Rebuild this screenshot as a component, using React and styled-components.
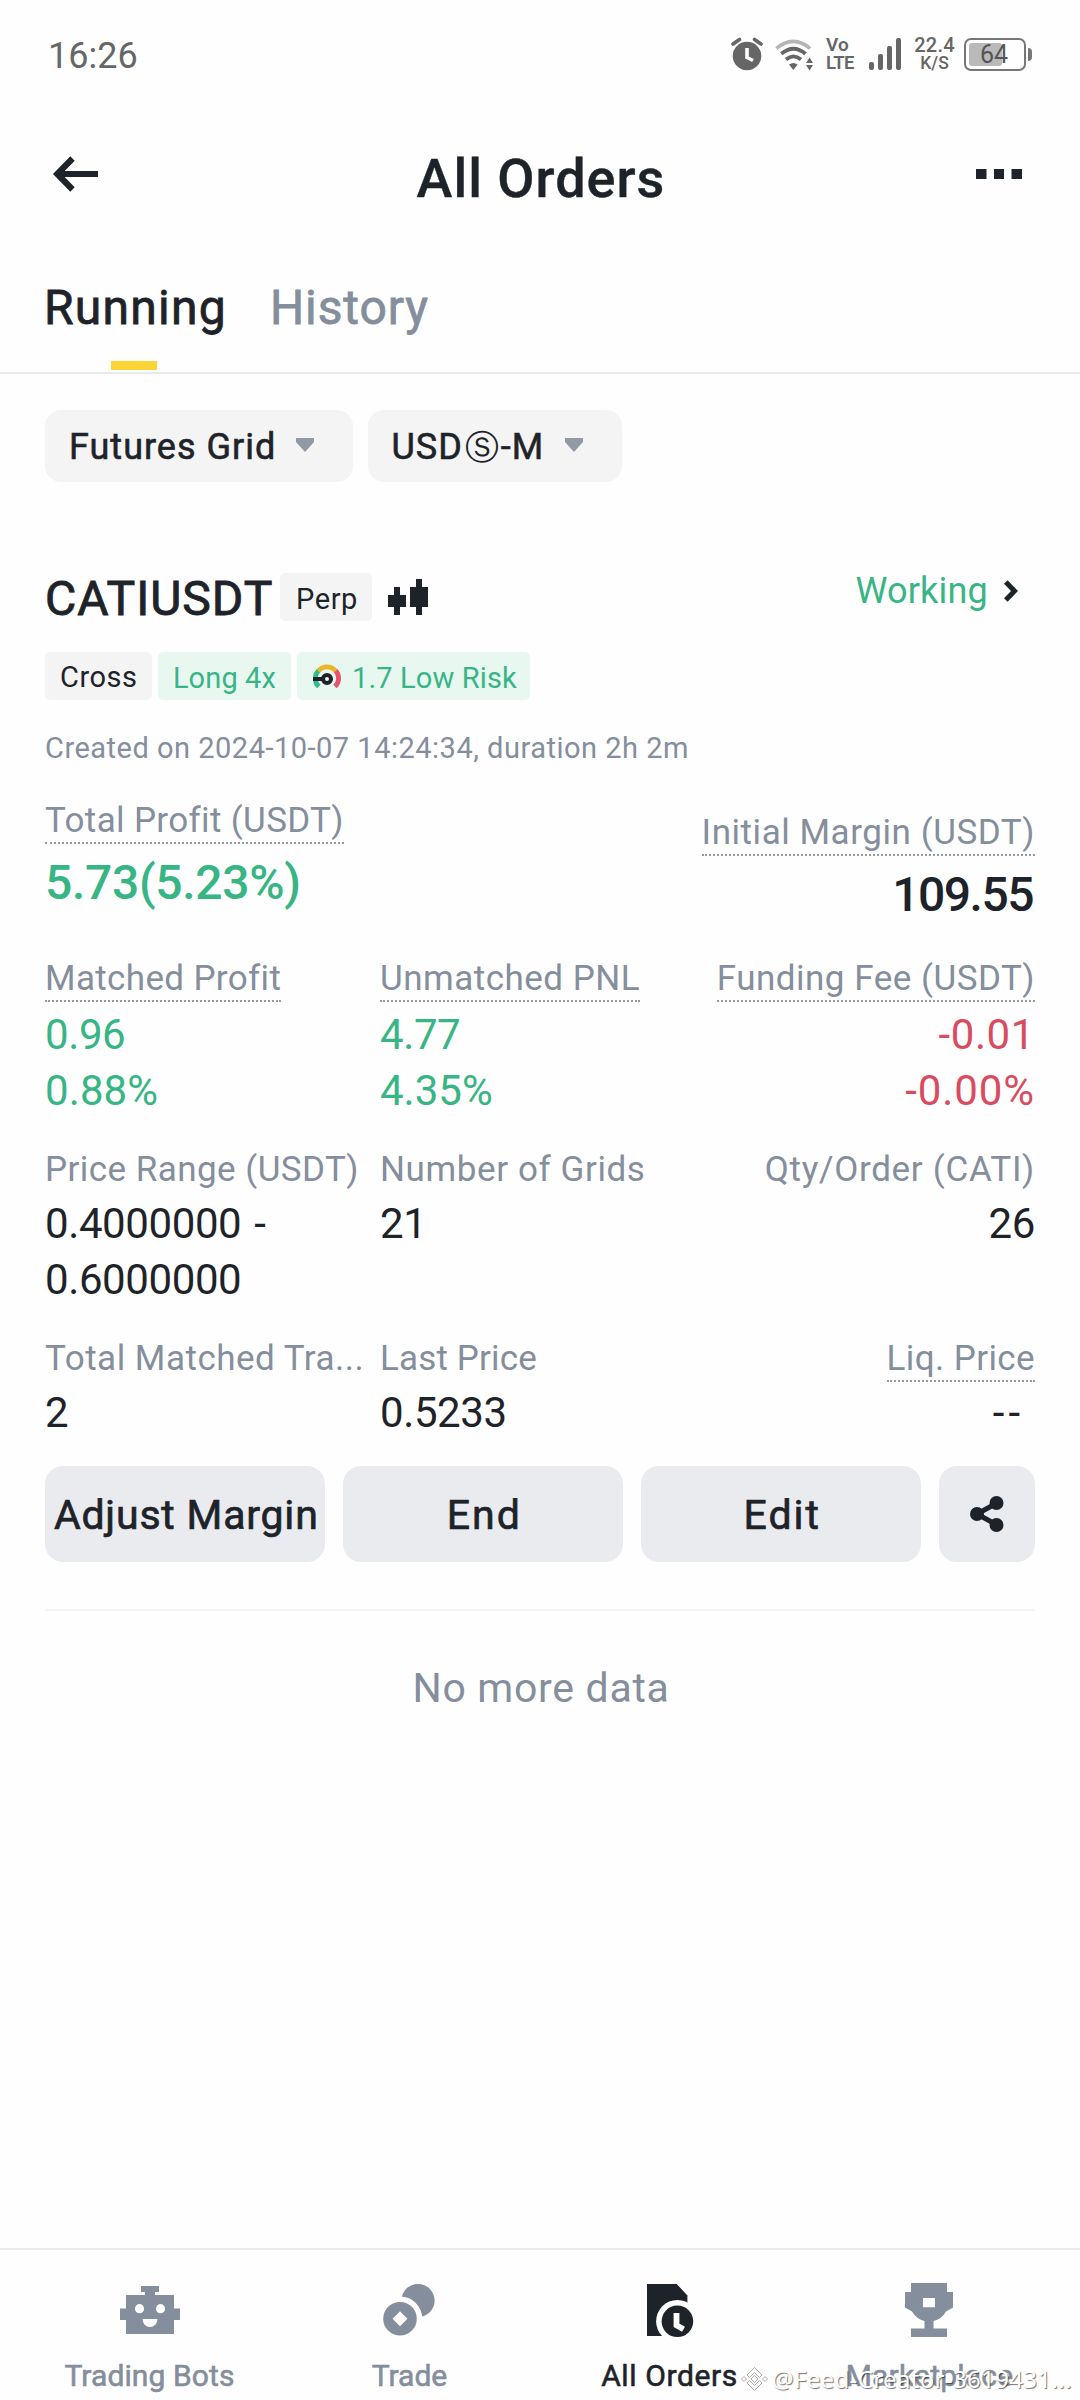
import React from 'react';
import styled, { createGlobalStyle } from 'styled-components';

const c = {
  ink: '#1e2329',
  muted: '#848e9c',
  green: '#38b585',
  red: '#d94b60',
  yellow: '#fcd535',
  status: '#666666',
  chip: '#f4f4f4',
  greenChip: '#e8f8f1',
  button: '#eaebef',
  line: '#eaeaea',
};

const GlobalStyle = createGlobalStyle`
  * { box-sizing: border-box; }
  body { margin: 0; background: #fefefe; }
  svg { display: block; flex: none; }
`;

const Screen = styled.div`
  position: relative;
  width: 1080px;
  height: 2400px;
  display: flex;
  flex-direction: column;
  overflow: hidden;
  background: #fefefe;
  color: ${c.ink};
  font-family: Roboto, "Liberation Sans", sans-serif;
  white-space: nowrap;
`;

/* ---------- status bar ---------- */
const StatusBar = styled.div`
  height: 134px;
  padding: 36px 48px 0 48px;
  display: flex;
  justify-content: space-between;
  align-items: flex-start;
  color: ${c.status};
`;
const Clock = styled.span`
  font-size: 36px;
  line-height: 40px;
`;
const StatusIcons = styled.div`
  height: 36px;
  display: flex;
  align-items: center;
  gap: 12px;
`;
const Stack = styled.div`
  width: ${(p) => p.$w}px;
  display: flex;
  flex-direction: column;
  align-items: ${(p) => p.$align || 'flex-start'};
  font-weight: ${(p) => p.$weight || 500};
  line-height: 18px;
`;
const StackLine = styled.span`
  font-size: ${(p) => p.$size}px;
  letter-spacing: ${(p) => p.$ls || 0}px;
`;
const Battery = styled.div`
  margin-left: -2px;
  display: flex;
  align-items: center;
  gap: 2px;
`;
const BatteryBody = styled.div`
  width: 62px;
  height: 33px;
  border: 2px solid #777;
  border-radius: 7px;
  padding: 3px;
  font-size: 25px;
  line-height: 24px;
`;
const BatteryFill = styled.div`
  width: 33px;
  height: 23px;
  padding-left: 11px;
  border-radius: 3px;
  background: #b9b9b9;
  color: #555;
`;
const BatteryNub = styled.div`
  width: 4px;
  height: 13px;
  border-radius: 0 4px 4px 0;
  background: #777;
`;

/* ---------- header ---------- */
const Header = styled.header`
  height: 89px;
  padding: 0 56px 0 50px;
  display: grid;
  grid-template-columns: 60px 1fr 54px;
  align-items: center;
`;
const Title = styled.h1`
  margin: 0;
  padding-left: 2px;
  text-align: center;
  font-size: 54px;
  font-weight: 500;
  line-height: 62px;
  letter-spacing: 1px;
  -webkit-text-stroke: 0.4px ${c.ink};
`;
const HeaderAction = styled.div`
  display: flex;
  justify-content: ${(p) => p.$side};
  margin-bottom: 9px;
`;

/* ---------- tabs ---------- */
const Tabs = styled.nav`
  height: 151px;
  padding: 57px 44px 0;
  display: flex;
  gap: 43px;
  border-bottom: 2px solid ${c.line};
`;
const Tab = styled.div`
  display: flex;
  flex-direction: column;
  align-items: center;
  color: ${(p) => (p.$active ? c.ink : c.muted)};
  font-size: 48px;
  line-height: 56px;
  letter-spacing: ${(p) => (p.$active ? 1.25 : 0.9)}px;
  -webkit-text-stroke: 0.8px currentColor;
`;
const TabMark = styled.i`
  width: 46px;
  height: 9px;
  margin: 25px 2px 0 0;
  background: ${c.yellow};
`;

/* ---------- filters ---------- */
const Filters = styled.div`
  padding: 36px 45px 0;
  display: flex;
  gap: 15px;
`;
const Filter = styled.div`
  width: ${(p) => p.$w}px;
  height: 72px;
  padding: 0 39px 2px 24px;
  display: flex;
  align-items: center;
  justify-content: space-between;
  border-radius: 16px;
  background: ${c.chip};
  font-size: 36px;
  letter-spacing: 1px;
  -webkit-text-stroke: 0.6px currentColor;
`;
const FilterText = styled.span`
  display: flex;
  align-items: center;
  line-height: 44px;
  padding-top: 4px;
`;
const Coin = styled.span`
  width: 38px;
  display: flex;
  justify-content: center;
  font-family: "DejaVu Sans", sans-serif;
  font-size: 34px;
  letter-spacing: 0;
  -webkit-text-stroke: 0;
`;

/* ---------- order card ---------- */
const Card = styled.section`
  margin: 83px 45px 0;
`;
const CardHead = styled.div`
  height: 64px;
  display: flex;
  align-items: center;
  justify-content: space-between;
`;
const PairRow = styled.div`
  display: flex;
  align-items: center;
`;
const Pair = styled.span`
  width: 235px;
  padding-top: 3px;
  font-size: 48px;
  line-height: 56px;
  letter-spacing: 1px;
  -webkit-text-stroke: 0.9px currentColor;
`;
const Tag = styled.span`
  height: 48px;
  padding: ${(p) => p.$pad};
  display: flex;
  align-items: center;
  border-radius: 5px;
  background: ${(p) => (p.$green ? c.greenChip : c.chip)};
  color: ${(p) => (p.$green ? c.green : c.ink)};
  font-size: 29px;
  letter-spacing: ${(p) => p.$ls || 0}px;
  svg { margin-right: 11px; }
`;
const CandleWrap = styled.span`
  margin-left: 16px;
`;
const State = styled.div`
  margin-bottom: 13px;
  padding-right: 17px;
  display: flex;
  align-items: center;
  gap: 16px;
  color: ${c.green};
  font-size: 36px;
  line-height: 44px;
  letter-spacing: 0.2px;
`;
const Tags = styled.div`
  margin-top: 23px;
  display: flex;
  gap: 6px;
`;
const Created = styled.div`
  margin-top: 28px;
  font-size: 29px;
  line-height: 40px;
  letter-spacing: 0.5px;
  color: ${c.muted};
`;
const Summary = styled.div`
  margin-top: 31px;
  height: 124px;
  display: flex;
  justify-content: space-between;
`;
const Grid = styled.div`
  margin-top: ${(p) => p.$mt}px;
  display: grid;
  grid-template-columns: 335px 320px 335px;
`;
const Cell = styled.div`
  display: flex;
  flex-direction: column;
  align-items: ${(p) => (p.$right ? 'flex-end' : 'flex-start')};
  padding-top: ${(p) => p.$drop || 0}px;
`;
const Label = styled.span`
  padding-top: 1px;
  font-size: 35px;
  line-height: 42px;
  letter-spacing: ${(p) => p.$ls ?? 0.4}px;
  color: ${c.muted};
  margin-bottom: ${(p) => (p.$tight ? 3 : 5)}px;
  border-bottom: ${(p) => (p.$hint ? '2px dotted #979a9c' : '0')};
`;
const Value = styled.span`
  font-size: 42px;
  line-height: 56px;
  letter-spacing: ${(p) => p.$ls ?? -0.4}px;
  word-spacing: 3px;
  padding-right: ${(p) => p.$inset || 0}px;
  color: ${(p) => c[p.$tone] || c.ink};
`;
const BigValue = styled.span`
  margin-top: 6px;
  padding-right: ${(p) => p.$inset || 0}px;
  font-size: 48px;
  font-weight: 500;
  line-height: 56px;
  letter-spacing: ${(p) => p.$ls}px;
  color: ${(p) => c[p.$tone] || c.ink};
`;
const Actions = styled.div`
  margin-top: 25px;
  display: flex;
  gap: 18.5px;
`;
const Button = styled.button`
  flex: ${(p) => (p.$square ? '0 0 96px' : '1 1 0')};
  min-width: 0;
  height: 96px;
  padding: ${(p) => (p.$square ? '0' : '2px 0 0 3px')};
  border: 0;
  border-radius: 18px;
  background: ${c.button};
  display: flex;
  align-items: center;
  justify-content: center;
  color: ${c.ink};
  font: 400 41px Roboto, "Liberation Sans", sans-serif;
  letter-spacing: ${(p) => p.$ls || 0}px;
  -webkit-text-stroke: 0.7px currentColor;
`;
const Divider = styled.div`
  height: 2px;
  margin-top: 47px;
  background: #f2f3f4;
`;
const Empty = styled.p`
  margin: 53px 0 0;
  padding-left: 2px;
  text-align: center;
  font-size: 41px;
  line-height: 48px;
  letter-spacing: 0.7px;
  color: ${c.muted};
`;

/* ---------- bottom navigation ---------- */
const BottomNav = styled.nav`
  margin-top: auto;
  height: 152px;
  padding: 31px 20px 0;
  border-top: 2px solid ${c.line};
  display: grid;
  grid-template-columns: repeat(4, 1fr);
`;
const NavItem = styled.div`
  display: flex;
  flex-direction: column;
  align-items: center;
  gap: 17px;
  color: ${(p) => (p.$active ? c.ink : c.muted)};
  font-size: 30px;
  line-height: 36px;
  letter-spacing: ${(p) => p.$ls || 0}px;
  -webkit-text-stroke: 0.6px currentColor;
`;
const NavLabel = styled.span`
  margin-right: 1px;
`;
const Watermark = styled.div`
  position: absolute;
  left: 740px;
  bottom: 6px;
  display: flex;
  align-items: center;
  gap: 3px;
  font-family: "Noto Sans", sans-serif;
  font-size: 24px;
  letter-spacing: 0.35px;
  line-height: 30px;
  color: #fff;
  text-shadow: 1px 1px 1px rgba(0, 0, 0, 0.55);
`;

/* ---------- icons ---------- */
const AlarmIcon = () => (
  <svg width="32" height="34" viewBox="0 0 32 34" fill="none">
    <circle cx="16" cy="19" r="14.3" fill={c.status} />
    <path d="M2 7 8.5 2.5M30 7 23.5 2.5" stroke={c.status} strokeWidth="3.6" strokeLinecap="round" />
    <path d="M16 11v9.5l6 3" stroke="#fefefe" strokeWidth="3.6" />
  </svg>
);
const WifiIcon = () => (
  <svg width="39" height="34" viewBox="0 0 39 34" fill="none">
    <path d="M1.5 11.5C12 2 24.5 2 35 11.5" stroke="#b5b5b5" strokeWidth="3.6" />
    <path d="M6.3 16.8C14.5 10 22.5 10 30.5 16.8" stroke={c.status} strokeWidth="3.8" />
    <path d="M11 22.5C16 18.3 21 18.3 26 22.5" stroke={c.status} strokeWidth="3.8" />
    <path d="M14 27.5q4.3-3 8.6 0L18.3 33z" fill={c.status} />
    <path d="M34.5 20.5 38 26h-7zM34.5 33.5 31 28h7z" fill={c.status} />
  </svg>
);
const SignalIcon = () => (
  <svg width="34" height="34" viewBox="0 0 34 34" fill={c.status}>
    <rect x="0" y="25" width="5" height="8" rx="2" />
    <rect x="9" y="17" width="5" height="16" rx="2" />
    <rect x="18" y="9" width="5" height="24" rx="2" />
    <rect x="27" y="1" width="5" height="32" rx="2" />
  </svg>
);
const BackIcon = () => (
  <svg width="52" height="40" viewBox="0 0 52 40" fill="none" stroke={c.ink} strokeWidth="6.2">
    <path d="M48 20H8M22.5 4.5 7.3 20l15.2 15.5" />
  </svg>
);
const MoreIcon = () => (
  <svg width="48" height="12" viewBox="0 0 48 12" fill={c.ink}>
    <path d="M0 1h10.5v10H0zM18 1h10v10H18zM35.5 1H46v10H35.5z" />
  </svg>
);
const Caret = () => (
  <svg width="18" height="14" viewBox="0 0 18 14" fill="#9199a5">
    <path d="M0 0h18v4L9 14 0 4z" />
  </svg>
);
const CandleIcon = () => (
  <svg width="40" height="36" viewBox="0 0 40 36" fill={c.ink}>
    <path d="M0 16h6V8h6v8h6v12h-6v8H6v-8H0zM22 8h6V0h6v8h6v20h-6v8h-6v-8h-6z" />
  </svg>
);
const ChevronIcon = () => (
  <svg width="14" height="22" viewBox="0 0 14 22" fill="none" stroke={c.ink} strokeWidth="5">
    <path d="M1.8 2 10.5 11l-8.7 9" />
  </svg>
);
const GaugeIcon = () => (
  <svg width="28" height="28" viewBox="0 0 28 28" fill="none" strokeWidth="4.8">
    <path d="M5.4 6.7A11.3 11.3 0 0 0 5.8 22.6" stroke="#2ebd85" />
    <path d="M22.6 6.7A11.3 11.3 0 0 1 22 22.6" stroke="#e9526a" />
    <path d="M5.4 6.9A11.3 11.3 0 0 1 22.6 6.9" stroke="#eab52b" />
    <circle cx="14" cy="15" r="4" stroke={c.ink} strokeWidth="4" />
    <path d="M0 15h10" stroke={c.ink} strokeWidth="4" />
  </svg>
);
const ShareIcon = () => (
  <svg width="36" height="38" viewBox="0 0 36 38" fill={c.ink}>
    <path d="M28 8 8 19l20 11" fill="none" stroke={c.ink} strokeWidth="5" />
    <circle cx="27.5" cy="8" r="7" />
    <circle cx="8" cy="19" r="7" />
    <circle cx="27.5" cy="30" r="7" />
  </svg>
);
const RobotIcon = () => (
  <svg width="60" height="60" viewBox="0 0 60 60">
    <path fill={c.muted} d="M21 5h18v6h-4v3h19v13.5h6V39h-6v14H6V39H0V27.5h6V14h19v-3h-4z" />
    <circle cx="19.5" cy="27.7" r="4.6" fill="#fefefe" />
    <circle cx="40.5" cy="27.7" r="4.6" fill="#fefefe" />
    <path d="M22.5 38h15a7.5 8 0 0 1-15 0z" fill="#fefefe" />
  </svg>
);
const TradeIcon = () => (
  <svg width="60" height="60" viewBox="0 0 60 60" fill={c.muted}>
    <circle cx="38" cy="19.5" r="16.6" />
    <circle cx="20" cy="37.7" r="22.3" fill="#fefefe" />
    <circle cx="20" cy="37.7" r="16.8" />
    <path d="M20 30.2l7.5 7.5-7.5 7.5-7.5-7.5z" fill="#fefefe" />
  </svg>
);
const OrdersIcon = () => (
  <svg width="60" height="60" viewBox="0 0 60 60" fill={c.ink}>
    <path d="M7 3h29.7l10.7 11.5V55H7z" />
    <circle cx="37.4" cy="40.3" r="21.3" fill="#fefefe" />
    <circle cx="37.4" cy="40.3" r="15.8" />
    <path d="M36.5 32v12.2l7 4" fill="none" stroke="#fefefe" strokeWidth="5.8" />
  </svg>
);
const TrophyIcon = () => (
  <svg width="60" height="60" viewBox="0 0 60 60" fill={c.muted}>
    <path
      fillRule="evenodd"
      d="M11 2h36v9h6v15.5L46 30.5Q41.5 38.5 33.5 40v7.5H47V56H11v-8.5h13.5V40Q16.5 38 12 30.5L5 26.5V11h6zM23 17v9.3h12V17z"
    />
  </svg>
);
const DiamondMark = () => (
  <svg width="29" height="26" viewBox="0 0 29 26" fill="#fff" stroke="#a9a9a9" strokeWidth="1">
    <path d="M14.5 1.5 22 9l-2.5 2.5-5-5-5 5L7 9z" />
    <path d="M14.5 9.5 18 13l-3.5 3.5L11 13zM4 10.5 6.5 13 4 15.5 1.5 13zM25 10.5l2.5 2.5-2.5 2.5-2.5-2.5z" />
    <path d="M7 17l2.5-2.5 5 5 5-5L22 17l-7.5 7.5z" />
  </svg>
);

export default function App() {
  return (
    <>
      <GlobalStyle />
      <Screen>
        <StatusBar>
          <Clock>16:26</Clock>
          <StatusIcons>
            <AlarmIcon />
            <WifiIcon />
            <Stack $w={31} $weight={600}>
              <StackLine $size={19}>Vo</StackLine>
              <StackLine $size={18.5} $ls={-0.6}>LTE</StackLine>
            </Stack>
            <SignalIcon />
            <Stack $w={39} $align="center">
              <StackLine $size={20} $ls={0.2}>22.4</StackLine>
              <StackLine $size={17.5}>K/S</StackLine>
            </Stack>
            <Battery>
              <BatteryBody>
                <BatteryFill>64</BatteryFill>
              </BatteryBody>
              <BatteryNub />
            </Battery>
          </StatusIcons>
        </StatusBar>

        <Header>
          <HeaderAction $side="flex-start"><BackIcon /></HeaderAction>
          <Title>All Orders</Title>
          <HeaderAction $side="flex-end"><MoreIcon /></HeaderAction>
        </Header>

        <Tabs>
          <Tab $active>
            Running
            <TabMark />
          </Tab>
          <Tab>History</Tab>
        </Tabs>

        <Filters>
          <Filter $w={307.5}>
            <FilterText>Futures Grid</FilterText>
            <Caret />
          </Filter>
          <Filter $w={254}>
            <FilterText>USD<Coin>Ⓢ</Coin>-M</FilterText>
            <Caret />
          </Filter>
        </Filters>

        <Card>
          <CardHead>
            <PairRow>
              <Pair>CATIUSDT</Pair>
              <Tag $pad="3px 14px 0 16px" $ls={0.6}>Perp</Tag>
              <CandleWrap><CandleIcon /></CandleWrap>
            </PairRow>
            <State>
              Working
              <ChevronIcon />
            </State>
          </CardHead>
          <Tags>
            <Tag $pad="1px 14.5px 0 15px" $ls={0.5}>Cross</Tag>
            <Tag $pad="3px 15px 0 15px" $ls={0.1} $green>Long 4x</Tag>
            <Tag $pad="3px 13px 0 16px" $ls={0.15} $green>
              <GaugeIcon />
              1.7 Low Risk
            </Tag>
          </Tags>
          <Created>Created on 2024-10-07 14:24:34, duration 2h 2m</Created>

          <Summary>
            <Cell>
              <Label $hint $ls={0.35}>Total Profit (USDT)</Label>
              <BigValue $tone="green" $ls={-0.3}>5.73(5.23%)</BigValue>
            </Cell>
            <Cell $right $drop={12}>
              <Label $hint $ls={0.55}>Initial Margin (USDT)</Label>
              <BigValue $ls={-1.5} $inset={2}>109.55</BigValue>
            </Cell>
          </Summary>

          <Grid $mt={34}>
            <Cell>
              <Label $hint $ls={0.35}>Matched Profit</Label>
              <Value $tone="green">0.96</Value>
              <Value $tone="green" $ls={0.1}>0.88%</Value>
            </Cell>
            <Cell>
              <Label $hint $ls={0.5}>Unmatched PNL</Label>
              <Value $tone="green">4.77</Value>
              <Value $tone="green" $ls={0}>4.35%</Value>
            </Cell>
            <Cell $right>
              <Label $hint $ls={0.5}>Funding Fee (USDT)</Label>
              <Value $tone="red" $ls={0.6}>-0.01</Value>
              <Value $tone="red" $ls={0.9}>-0.00%</Value>
            </Cell>
          </Grid>

          <Grid $mt={29}>
            <Cell>
              <Label $ls={0.45}>Price Range (USDT)</Label>
              <Value>0.4000000 -</Value>
              <Value>0.6000000</Value>
            </Cell>
            <Cell>
              <Label $ls={0.6}>Number of Grids</Label>
              <Value>21</Value>
            </Cell>
            <Cell $right>
              <Label $ls={0.7}>Qty/Order (CATI)</Label>
              <Value>26</Value>
            </Cell>
          </Grid>

          <Grid $mt={29}>
            <Cell>
              <Label $ls={0.5}>Total Matched Tra...</Label>
              <Value>2</Value>
            </Cell>
            <Cell>
              <Label $ls={0.15}>Last Price</Label>
              <Value>0.5233</Value>
            </Cell>
            <Cell $right>
              <Label $hint $tight $ls={0.4}>Liq. Price</Label>
              <Value $inset={11} $ls={4}>--</Value>
            </Cell>
          </Grid>

          <Actions>
            <Button $ls={0.8}>Adjust Margin</Button>
            <Button $ls={2}>End</Button>
            <Button $ls={2}>Edit</Button>
            <Button $square><ShareIcon /></Button>
          </Actions>
          <Divider />
          <Empty>No more data</Empty>
        </Card>

        <BottomNav>
          <NavItem $ls={0.1}><RobotIcon /><NavLabel>Trading Bots</NavLabel></NavItem>
          <NavItem><TradeIcon /><NavLabel>Trade</NavLabel></NavItem>
          <NavItem $active $ls={0.6}><OrdersIcon /><NavLabel>All Orders</NavLabel></NavItem>
          <NavItem $ls={0.2}><TrophyIcon /><NavLabel>Marketplace</NavLabel></NavItem>
        </BottomNav>

        <Watermark>
          <DiamondMark />
          @Feed-Creator-3619431...
        </Watermark>
      </Screen>
    </>
  );
}
